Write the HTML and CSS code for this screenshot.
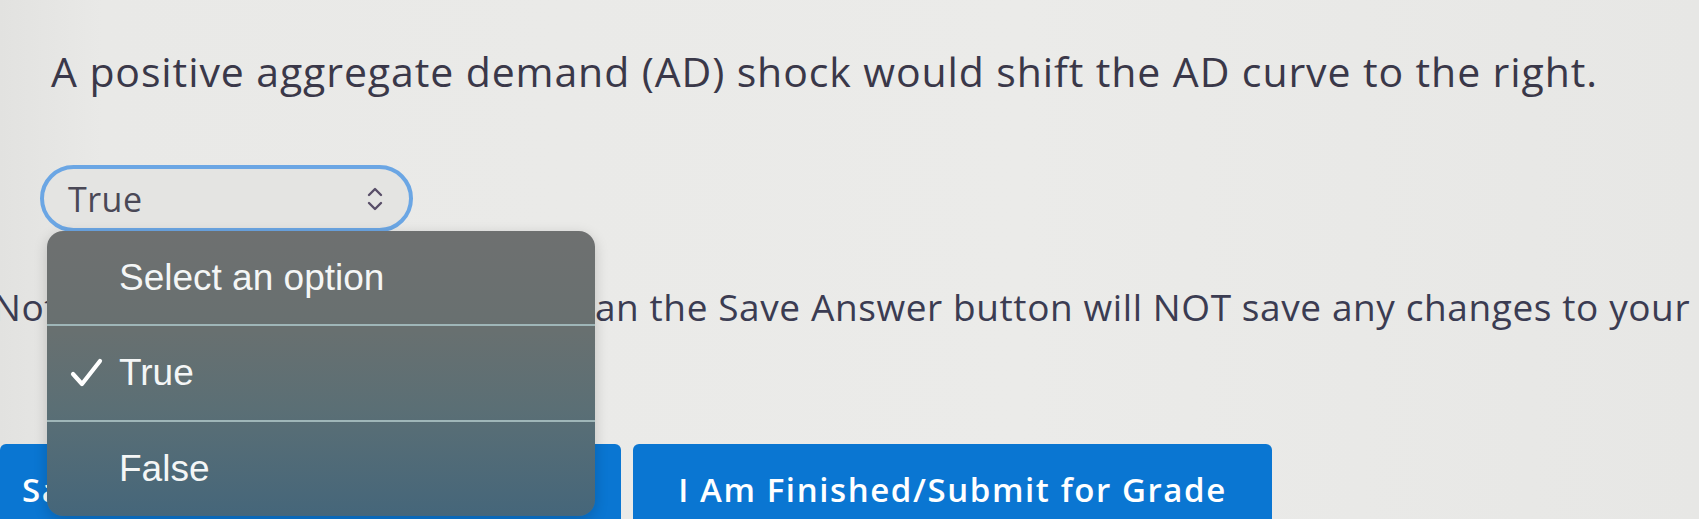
FILE: index.html
```html
<!DOCTYPE html>
<html lang="en">
<head>
    <meta charset="UTF-8">
    <meta name="viewport" content="width=device-width, initial-scale=1.0">
    <title>Question</title>
    <link rel="stylesheet" href="styles.css">
</head>
<body>
    <main class="quiz">
        <h1 class="question">A positive aggregate demand (AD) shock would shift the AD curve to the right.</h1>

        <div class="answer">
            <div class="select">
                <span>True</span>
                <svg class="chevron" width="16" height="26" viewBox="0 0 16 26">
                    <path d="M2 9 L8 3 L14 9 M2 17 L8 23 L14 17" fill="none" stroke="#584e68" stroke-width="2.4" stroke-linecap="round" stroke-linejoin="round"/>
                </svg>
            </div>

            <!-- open option list -->
            <ul class="menu">
                <li class="option">Select an option</li>
                <li class="option checked">
                    <svg class="check" width="34" height="30" viewBox="0 0 34 30">
                        <path d="M3 16 L12 26 L30 3" fill="none" stroke="#fff" stroke-width="4.2" stroke-linecap="round" stroke-linejoin="round"/>
                    </svg>
                    True
                </li>
                <li class="option">False</li>
            </ul>
        </div>

        <p class="note">Note: Clicking any button other than the Save Answer button will NOT save any changes to your answer.</p>

        <div class="actions">
            <button class="btn save">Save Answer</button>
            <button class="btn">I Am Finished/Submit for Grade</button>
        </div>
    </main>
</body>
</html>
```

FILE: styles.css
```css
body {
    margin: 0;
    overflow: hidden;
    background: linear-gradient(90deg, #e2e2e0 0%, #e9e9e7 6%, #ebebe9 60%, #e7e7e5 100%);
    font-family: "Open Sans", Arial, sans-serif;
    color: #3a3849;
}
.quiz {
    width: 1900px;
}
.question {
    margin: 0;
    padding: 47px 0 0 51px;
    font-size: 41px;
    font-weight: 500;
    line-height: 48px;
    letter-spacing: 0.9px;
}
.answer {
    position: relative;
    margin: 70px 0 0 40px;
}
.select {
    display: flex;
    align-items: center;
    justify-content: space-between;
    box-sizing: border-box;
    width: 373px;
    height: 67px;
    padding: 0 26px 0 24px;
    border: 4px solid #6ba6e4;
    border-radius: 34px;
    background: #e4e4e2;
    font-size: 34px;
    letter-spacing: 0.5px;
    color: #4a4856;
}
.menu {
    position: absolute;
    top: 66px;
    left: 7px;
    width: 548px;
    margin: 0;
    padding: 0;
    list-style: none;
    border-radius: 16px;
    overflow: hidden;
    background: linear-gradient(180deg, #6e7070 0%, #687070 35%, #5b6f75 62%, #45667a 100%);
    box-shadow: 0 4px 14px rgba(0,0,0,0.18);
    font-family: "Liberation Sans", Arial, sans-serif;
    font-size: 37px;
    color: #f4f6f6;
}
.option {
    display: flex;
    align-items: center;
    height: 94px;
    padding-left: 72px;
    border-top: 2px solid #9fb6b8;
}
.option:first-child {
    border-top: none;
    height: 93px;
}
.checked {
    padding-left: 23px;
    gap: 15px;
}
.note {
    margin: 49px 0 0 -7px;
    font-size: 37px;
    font-weight: 500;
    letter-spacing: 0.6px;
    white-space: nowrap;
    color: #3b3c52;
}
.actions {
    display: flex;
    gap: 12px;
    margin-top: 112px;
}
.btn {
    width: 639px;
    height: 98px;
    padding: 0 0 8px;
    border: none;
    border-radius: 6px 6px 0 0;
    background: #0a76d2;
    color: #fff;
    font-family: "Open Sans", Arial, sans-serif;
    font-size: 33px;
    font-weight: 600;
    letter-spacing: 1.6px;
}
.save {
    width: 621px;
    text-align: left;
    padding-left: 22px;
}
```
